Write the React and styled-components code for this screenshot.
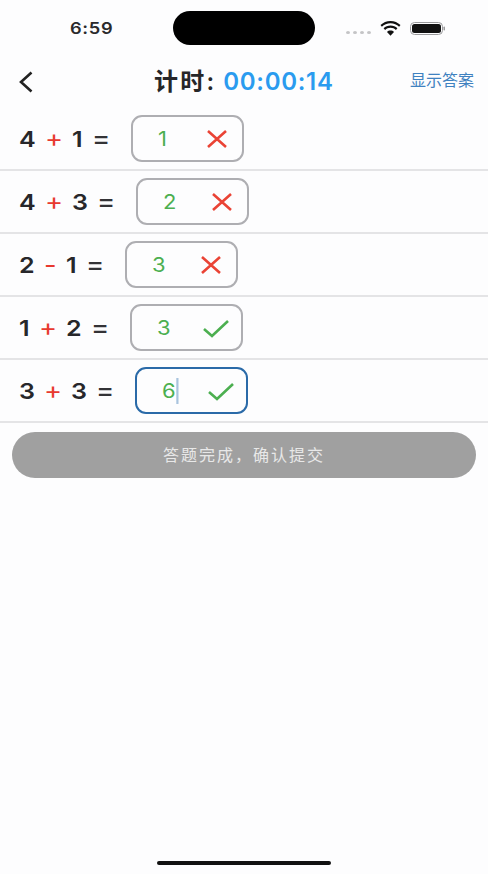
import React from "react";
import styled, { createGlobalStyle } from "styled-components";

const GlobalStyle = createGlobalStyle`
  html, body {
    margin: 0;
    padding: 0;
    background: #fdfdfe;
  }
  body {
    font-family: Inter, "Noto Sans CJK SC", sans-serif;
  }
`;

const Page = styled.div`
  width: 488px;
  height: 874px;
  display: flex;
  flex-direction: column;
  background: #fdfdfe;
  overflow: hidden;
`;

const StatusBar = styled.div`
  height: 56px;
  flex: none;
  display: flex;
  align-items: flex-start;
  padding-left: 70px;
  box-sizing: border-box;
`;

const Clock = styled.div`
  width: 103px;
  margin-top: 18px;
  font-size: 16px;
  line-height: 20px;
  font-weight: 600;
  letter-spacing: 0.6px;
  color: #2a2a2c;
  transform: scaleX(1.14);
  transform-origin: left center;
`;

const Island = styled.div`
  width: 142px;
  height: 34px;
  margin-top: 11px;
  border-radius: 17px;
  background: #000;
`;

const StatusIcons = styled.div`
  margin-left: 31px;
  margin-top: 20px;
  display: flex;
  align-items: center;
  height: 16px;
`;

const Dots = styled.div`
  display: flex;
  gap: 3px;
  margin-top: 8px;
  width: 34px;
`;

const Dot = styled.span`
  width: 4px;
  height: 3px;
  border-radius: 50%;
  background: #c4c4c6;
`;

const NavBar = styled.div`
  height: 46px;
  padding: 0 14px 6px 19px;
  flex: none;
  display: flex;
  align-items: center;
`;

const BackIcon = styled.svg`
  width: 14px;
  height: 22px;
  margin-top: 5px;
`;

const Title = styled.div`
  margin-left: 121px;
  font-size: 24px;
  font-weight: 600;
  color: #262628;
  white-space: nowrap;
`;

const TitleLabel = styled.span`
  letter-spacing: 2.2px;
`;

const Timer = styled.span`
  color: #2a9bef;
  margin-left: 7px;
  letter-spacing: 0.7px;
`;

const AnswerLink = styled.div`
  margin-left: auto;
  font-size: 16px;
  color: #3f81c0;
  white-space: nowrap;
`;

const Row = styled.div`
  height: 61px;
  flex: none;
  display: flex;
  align-items: center;
  padding-left: 19px;
  border-bottom: 2px solid #e4e4e6;
  box-sizing: content-box;
`;

const Expression = styled.div`
  display: flex;
  align-items: center;
  gap: 11px;
  margin-right: 23px;
  font-size: 22px;
  font-weight: 600;
  color: #27272a;
`;

const Term = styled.span`
  display: inline-block;
  transform: scaleX(1.14);
  transform-origin: left center;
`;

const Operator = styled(Term)`
  color: #e8392f;
  font-size: 24px;
  font-weight: 400;
`;

const Equals = styled(Term)`
  font-size: 24px;
  font-weight: 500;
  color: #333336;
`;

const AnswerBox = styled.div`
  width: 113px;
  height: 47px;
  box-sizing: border-box;
  display: flex;
  align-items: center;
  border-radius: 11px;
  border: 2px solid ${(p) => (p.$focused ? "#2a6aa8" : "#aeaeb2")};
  padding-left: 25px;
  padding-right: 12px;
`;

const AnswerValue = styled.span`
  display: inline-block;
  font-size: 20px;
  font-weight: 400;
  color: #4caf50;
  position: relative;
  transform: scaleX(1.1);
  transform-origin: left center;
`;

const Caret = styled.span`
  position: absolute;
  left: 100%;
  top: -1px;
  bottom: -1px;
  width: 1.5px;
  margin-left: 1px;
  background: #a9c4de;
`;

const MarkIcon = styled.svg`
  margin-left: auto;
  width: 26px;
  height: 22px;
  fill: none;
  stroke-width: 2.6;
`;

const SubmitButton = styled.div`
  margin: 9px 12px 0;
  height: 46px;
  padding-bottom: 3px;
  box-sizing: border-box;
  flex: none;
  border-radius: 23px;
  background: #a0a0a0;
  color: #e8e8e8;
  font-size: 16px;
  letter-spacing: 2px;
  display: flex;
  align-items: center;
  justify-content: center;
`;

const HomeBar = styled.div`
  margin: auto auto 9px;
  width: 174px;
  height: 4px;
  border-radius: 2px;
  background: #111;
`;

const questions = [
  { a: 4, op: "+", b: 1, value: 1, ok: false },
  { a: 4, op: "+", b: 3, value: 2, ok: false },
  { a: 2, op: "-", b: 1, value: 3, ok: false },
  { a: 1, op: "+", b: 2, value: 3, ok: true },
  { a: 3, op: "+", b: 3, value: 6, ok: true, focused: true },
];

function Mark({ ok }) {
  return (
    <MarkIcon viewBox="0 0 26 22" stroke={ok ? "#4caf50" : "#ea4335"}>
      {ok ? (
        <path d="M1 12 L9 19 L25 4" />
      ) : (
        <path d="M4 3 L22 19 M22 3 L4 19" />
      )}
    </MarkIcon>
  );
}

export default function App() {
  return (
    <Page>
      <GlobalStyle />
      <StatusBar>
        <Clock>6:59</Clock>
        <Island />
        <StatusIcons>
          <Dots>
            <Dot />
            <Dot />
            <Dot />
            <Dot />
          </Dots>
          <svg width="21" height="15" viewBox="0 0 21 15">
            <path d="M10.5 2.2c3.4 0 6.4 1.3 8.6 3.5l1.4-1.6C17.9 1.6 14.4 0 10.5 0S3.100 1.600.5 4.100l1.400 1.600c2.200-2.200 5.200-3.500 8.600-3.500z" fill="#111" />
            <path d="M10.500 6.800c2.100 0 4 .8 5.400 2.100l1.500-1.600c-1.800-1.700-4.200-2.700-6.900-2.700s-5.100 1-6.900 2.700l1.500 1.600c1.400-1.300 3.300-2.100 5.400-2.100z" fill="#111" />
            <path d="M10.500 9.600c-1.400 0-2.600.5-3.500 1.400l3.500 3.800 3.500-3.800c-.9-.9-2.100-1.400-3.500-1.400z" fill="#111" />
          </svg>
          <svg width="36" height="15" viewBox="0 0 36 15" style={{ marginLeft: 9 }}>
            <rect x="0.500" y="1.500" width="32" height="12" rx="4" fill="none" stroke="#9a9a9c" />
            <rect x="2" y="3" width="29" height="9" rx="2.500" fill="#111" />
            <rect x="33.500" y="5.500" width="1.500" height="4" rx="0.700" fill="#9a9a9c" />
          </svg>
        </StatusIcons>
      </StatusBar>
      <NavBar>
        <BackIcon viewBox="0 0 14 22" fill="none" stroke="#222" strokeWidth="2.600">
          <path d="M12.500 1.500 L2 11 L12.500 20.500" />
        </BackIcon>
        <Title>
          <TitleLabel>计时:</TitleLabel>
          <Timer>00:00:14</Timer>
        </Title>
        <AnswerLink>显示答案</AnswerLink>
      </NavBar>
      {questions.map((q, i) => (
        <Row key={i}>
          <Expression>
            <Term>{q.a}</Term>
            <Operator>{q.op}</Operator>
            <Term>{q.b}</Term>
            <Equals>=</Equals>
          </Expression>
          <AnswerBox $focused={q.focused}>
            <AnswerValue>
              {q.value}
              {q.focused && <Caret />}
            </AnswerValue>
            <Mark ok={q.ok} />
          </AnswerBox>
        </Row>
      ))}
      <SubmitButton>答题完成，确认提交</SubmitButton>
      <HomeBar />
    </Page>
  );
}
